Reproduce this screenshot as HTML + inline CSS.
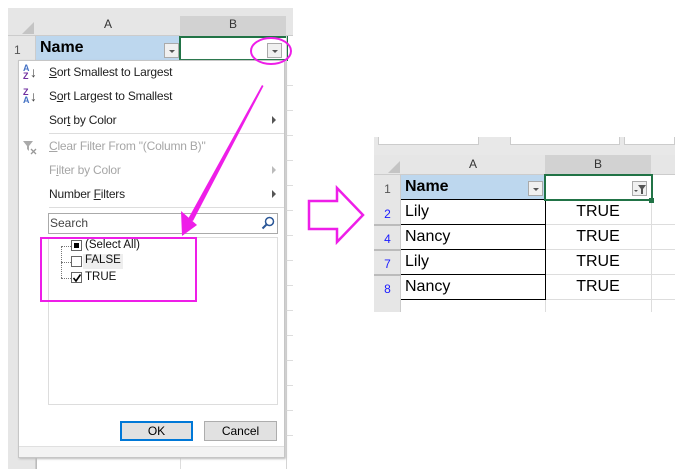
<!DOCTYPE html>
<html><head><style>
*{margin:0;padding:0;box-sizing:border-box}
body{width:675px;height:469px;background:#fff;position:relative;overflow:hidden;font-family:"Liberation Sans",sans-serif}
.a{position:absolute}
.mi{position:absolute;left:49px;font-size:12px;color:#222;letter-spacing:-0.2px}
.dis{color:#a6a6a6}
.tri{position:absolute;width:0;height:0;border-top:4px solid transparent;border-bottom:4px solid transparent;border-left:4px solid #555}
.dd{position:absolute;width:15px;height:15px;border:1px solid #aaa;background:#f0f0f0}
.dd:after{content:"";position:absolute;left:4px;top:6px;border-left:3px solid transparent;border-right:3px solid transparent;border-top:3px solid #555}
</style></head><body>
<!-- LEFT SHEET -->
<div class="a" style="left:8px;top:8px;width:285px;height:461px;background:#fff"></div>
<div class="a" style="left:8px;top:8px;width:285px;height:28px;background:#e6e6e6;border-bottom:1px solid #ccc"></div>
<div class="a" style="left:8px;top:36px;width:28px;height:433px;background:#e6e6e6;border-right:1px solid #ccc"></div>
<div class="a" style="left:180px;top:16px;width:106px;height:20px;background:#d2d2d2"></div>
<svg class="a" style="left:22px;top:22px" width="12" height="12"><path d="M12 0V12H0Z" fill="#c4c4c4"/></svg>
<div class="a" style="left:36px;top:17px;width:144px;text-align:center;font-size:12px;color:#333">A</div>
<div class="a" style="left:180px;top:17px;width:106px;text-align:center;font-size:12px;color:#333">B</div>
<div class="a" style="left:14px;top:43px;font-size:12px;color:#555">1</div>
<div class="a" style="left:36px;top:36px;width:144px;height:24px;background:#bdd7ee"></div>
<div class="a" style="left:40px;top:39px;font-size:16px;font-weight:bold;color:#000">Name</div>
<div class="dd" style="left:164px;top:43px"></div>
<div class="a" style="left:179px;top:36px;width:109px;height:25px;border:2px solid #217346"></div>
<div class="dd" style="left:267px;top:43px"></div>
<div class="a" style="left:286px;top:36px;width:1px;height:433px;background:#d4d4d4"></div>
<div class="a" style="left:36px;top:458px;width:1px;height:11px;background:#bbb"></div>
<div class="a" style="left:180px;top:458px;width:1px;height:11px;background:#ddd"></div>
<div class="a" style="left:286px;top:85px;width:7px;height:1px;background:#ddd;box-shadow:0 25px #ddd,0 50px #ddd,0 75px #ddd,0 100px #ddd,0 125px #ddd,0 150px #ddd,0 175px #ddd,0 200px #ddd,0 225px #ddd,0 250px #ddd,0 275px #ddd,0 300px #ddd,0 325px #ddd,0 350px #ddd"></div>
<!-- PANEL -->
<div class="a" style="left:18px;top:60px;width:267px;height:398px;background:#fff;border:1px solid #c6c6c6;box-shadow:1px 1px 2px #bbb"></div>
<div class="a" style="left:19px;top:446px;width:265px;height:11px;background:#f3f3f3;border-top:1px solid #e0e0e0"></div>
<div class="a" style="left:23px;top:64px;font-size:9px;line-height:8px;color:#4472c4;font-weight:bold">A<br><span style="color:#7030a0">Z</span></div>
<div class="a" style="left:30px;top:64px;font-size:14px;color:#444">↓</div>
<div class="a" style="left:23px;top:88px;font-size:9px;line-height:8px;color:#7030a0;font-weight:bold">Z<br><span style="color:#4472c4">A</span></div>
<div class="a" style="left:30px;top:88px;font-size:14px;color:#444">↓</div>
<div class="mi" style="top:65px"><u>S</u>ort Smallest to Largest</div>
<div class="mi" style="top:89px">S<u>o</u>rt Largest to Smallest</div>
<div class="mi" style="top:113px">Sor<u>t</u> by Color</div>
<div class="tri" style="left:272px;top:116px"></div>
<div class="a" style="left:49px;top:133px;width:235px;height:1px;background:#ddd"></div>
<svg class="a" style="left:22px;top:140px" width="16" height="16"><path d="M1 1H11L7 6V11L5 9V6Z" fill="#aaa"/><path d="M9 9L14 14M14 9L9 14" stroke="#999" stroke-width="1.3"/></svg>
<div class="mi dis" style="top:139px"><u>C</u>lear Filter From "(Column B)"</div>
<div class="mi dis" style="top:163px">F<u>i</u>lter by Color</div>
<div class="tri" style="left:272px;top:166px;border-left-color:#bbb"></div>
<div class="mi" style="top:187px">Number <u>F</u>ilters</div>
<div class="tri" style="left:272px;top:190px"></div>
<div class="a" style="left:49px;top:207px;width:235px;height:1px;background:#ddd"></div>
<div class="a" style="left:48px;top:213px;width:230px;height:21px;border:1px solid #aaa"></div>
<div class="a" style="left:50px;top:216px;font-size:12px;color:#444">Search</div>
<svg class="a" style="left:261px;top:216px" width="14" height="14"><circle cx="8.5" cy="5.5" r="4" fill="none" stroke="#2b5797" stroke-width="1.5"/><path d="M6 8L1.5 12.5" stroke="#2b5797" stroke-width="2"/></svg>
<div class="a" style="left:48px;top:237px;width:230px;height:168px;border:1px solid #ddd"></div>
<div class="a" style="left:61px;top:246px;width:1px;height:32px;border-left:1px dotted #777"></div>
<div class="a" style="left:61px;top:246px;width:10px;border-top:1px dotted #777"></div>
<div class="a" style="left:61px;top:262px;width:10px;border-top:1px dotted #777"></div>
<div class="a" style="left:61px;top:278px;width:10px;border-top:1px dotted #777"></div>
<div class="a" style="left:71px;top:240px;width:11px;height:11px;border:1px solid #666;background:#fff"><div style="margin:2px;width:5px;height:5px;background:#000"></div></div>
<div class="a" style="left:71px;top:256px;width:11px;height:11px;border:1px solid #666;background:#fff"></div>
<div class="a" style="left:71px;top:272px;width:11px;height:11px;border:1px solid #666;background:#fff"></div>
<svg class="a" style="left:72px;top:273px" width="10" height="10"><path d="M1.5 5L4 8L8.5 1.5" fill="none" stroke="#000" stroke-width="1.6"/></svg>
<div class="a" style="left:85px;top:239px;font-size:11.5px;color:#111">(Select All)</div>
<div class="a" style="left:83px;top:254px;padding:0 2px;height:15px;background:#eee;font-size:11.5px;color:#111">FALSE</div>
<div class="a" style="left:85px;top:271px;font-size:11.5px;color:#111">TRUE</div>
<div class="a" style="left:40px;top:237px;width:157px;height:65px;border:2px solid #ee1ee8"></div>
<div class="a" style="left:120px;top:421px;width:73px;height:20px;border:2px solid #0078d7;background:#e1e1e1;text-align:center;font-size:12px;line-height:16px">OK</div>
<div class="a" style="left:204px;top:421px;width:73px;height:20px;border:1px solid #adadad;background:#e1e1e1;text-align:center;font-size:12px;line-height:18px">Cancel</div>
<!-- magenta annotations -->
<svg class="a" style="left:0;top:0" width="300" height="300">
<ellipse cx="271" cy="51" rx="20" ry="13" fill="none" stroke="#ee1ee8" stroke-width="2"/>
<path d="M262 85L263.5 86L193 221L188 219Z" fill="#ee1ee8"/>
<path d="M182 236L181 211L197 225Z" fill="#ee1ee8"/>
</svg>
<!-- ARROW -->
<svg class="a" style="left:304px;top:185px" width="64" height="62"><path d="M5 16H33V3L59 30L33 57V44H5Z" fill="none" stroke="#ee1ee8" stroke-width="2.5"/></svg>
<!-- RIGHT SHEET -->
<div class="a" style="left:374px;top:137px;width:301px;height:18px;background:#e8e8e8"></div>
<div class="a" style="left:378px;top:137px;width:101px;height:8px;background:#fff;border:1px solid #ccc;border-top:none"></div>
<div class="a" style="left:510px;top:137px;width:110px;height:8px;background:#fff;border:1px solid #ccc;border-top:none"></div>
<div class="a" style="left:624px;top:137px;width:51px;height:8px;background:#fff;border:1px solid #ccc;border-top:none"></div>
<div class="a" style="left:374px;top:155px;width:301px;height:20px;background:#e6e6e6;border-bottom:1px solid #ccc"></div>
<div class="a" style="left:545px;top:155px;width:106px;height:20px;background:#d2d2d2"></div>
<svg class="a" style="left:388px;top:161px" width="12" height="12"><path d="M12 0V12H0Z" fill="#c4c4c4"/></svg>
<div class="a" style="left:401px;top:157px;width:144px;text-align:center;font-size:12px;color:#333">A</div>
<div class="a" style="left:545px;top:157px;width:106px;text-align:center;font-size:12px;color:#333">B</div>
<div class="a" style="left:374px;top:175px;width:27px;height:137px;background:#e6e6e6;border-right:1px solid #ccc"></div>
<div class="a" style="left:374px;top:182px;width:27px;text-align:center;font-size:12px;color:#555">1</div>
<div class="a" style="left:374px;top:207px;width:27px;text-align:center;font-size:12px;color:#1a1aff">2</div>
<div class="a" style="left:374px;top:232px;width:27px;text-align:center;font-size:12px;color:#1a1aff">4</div>
<div class="a" style="left:374px;top:257px;width:27px;text-align:center;font-size:12px;color:#1a1aff">7</div>
<div class="a" style="left:374px;top:282px;width:27px;text-align:center;font-size:12px;color:#1a1aff">8</div>
<div class="a" style="left:374px;top:224px;width:27px;height:2px;background:#bbb;box-shadow:0 25px #bbb,0 50px #bbb"></div>
<div class="a" style="left:401px;top:175px;width:144px;height:25px;background:#bdd7ee"></div>
<div class="a" style="left:405px;top:178px;font-size:16px;font-weight:bold;color:#000">Name</div>
<div class="dd" style="left:528px;top:181px"></div>
<div class="a" style="left:401px;top:199px;width:145px;height:1px;background:#000;box-shadow:0 25px #000,0 50px #000,0 75px #000,0 100px #000"></div>
<div class="a" style="left:545px;top:200px;width:1px;height:100px;background:#000"></div>
<div class="a" style="left:546px;top:224px;width:129px;height:1px;background:#ddd;box-shadow:0 25px #ddd,0 50px #ddd,0 75px #ddd"></div>
<div class="a" style="left:651px;top:200px;width:1px;height:112px;background:#ddd"></div>
<div class="a" style="left:545px;top:300px;width:1px;height:12px;background:#ddd"></div>
<div class="a" style="left:544px;top:174px;width:109px;height:27px;border:2px solid #217346"></div>
<div class="a" style="left:649px;top:198px;width:5px;height:5px;background:#217346"></div>
<div class="a" style="left:632px;top:181px;width:15px;height:15px;border:1px solid #aaa;background:#f0f0f0"></div>
<svg class="a" style="left:633px;top:182px" width="14" height="14"><path d="M5 3H13L10 7V12H8V7Z" fill="#555"/><path d="M1 8H5L3 10Z" fill="#555"/></svg>
<div class="a" style="left:405px;top:203px;font-size:16px">Lily</div>
<div class="a" style="left:405px;top:228px;font-size:16px">Nancy</div>
<div class="a" style="left:405px;top:253px;font-size:16px">Lily</div>
<div class="a" style="left:405px;top:278px;font-size:16px">Nancy</div>
<div class="a" style="left:545px;top:203px;width:106px;text-align:center;font-size:16px">TRUE</div>
<div class="a" style="left:545px;top:228px;width:106px;text-align:center;font-size:16px">TRUE</div>
<div class="a" style="left:545px;top:253px;width:106px;text-align:center;font-size:16px">TRUE</div>
<div class="a" style="left:545px;top:278px;width:106px;text-align:center;font-size:16px">TRUE</div>
</body></html>
